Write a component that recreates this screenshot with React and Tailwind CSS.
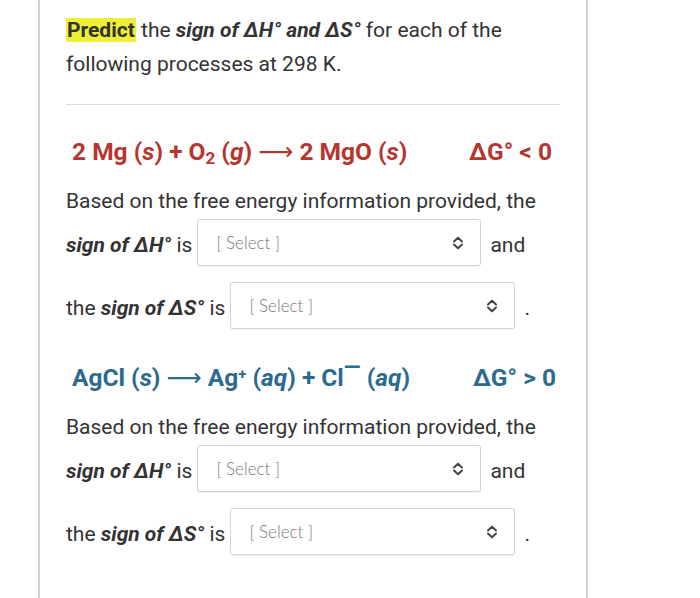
import React from "react";

function SelectBox({ width }) {
    return (
        <div
            className={`mx-[5px] flex h-[47px] items-center justify-between rounded-[3px] border border-[#d4d4d4] bg-white pl-[18px] pr-[16px] shadow-[0_1px_1px_rgba(0,0,0,0.06)] ${width}`}
        >
            <span className="font-['Lato'] text-[17px] font-light text-[#777]">[ Select ]</span>
            <svg width="12" height="14" viewBox="0 0 12 14" fill="none" stroke="#444" strokeWidth="2" strokeLinecap="round" strokeLinejoin="round">
                <path d="M2 5.5 6 1.8l4 3.7" />
                <path d="M2 8.5 6 12.2l4-3.7" />
            </svg>
        </div>
    );
}

function Question({ equation, dg, color, first }) {
    return (
        <div>
            <div className={`flex items-center justify-between text-[24.5px] font-bold leading-[34px] ${color} ${first ? "mt-[30px]" : "mt-[32px]"}`}>
                <span className="pl-[6px]">{equation}</span>
                <span className={first ? "pr-[8px]" : "pr-[4px]"}>{dg}</span>
            </div>
            <p className="mt-[15px] leading-[34px]">Based on the free energy information provided, the</p>
            <div className="mt-[1px] flex items-center">
                <span className="pt-[6px]">
                    <b><i>sign of ΔH°</i></b> is
                </span>
                <SelectBox width="w-[284px]" />
                <span className="pt-[6px] pl-[4px]">and</span>
            </div>
            <div className="mt-[16px] flex items-center">
                <span className="pt-[6px]">
                    the <b><i>sign of ΔS°</i></b> is
                </span>
                <SelectBox width="w-[285px]" />
                <span className="pt-[6px] pl-[4px]">.</span>
            </div>
        </div>
    );
}

export default function App() {
    return (
        <div className="h-[598px] w-[700px] overflow-hidden bg-white font-['Roboto',sans-serif] text-[21px] text-[#333]">
            <div className="ml-[38px] h-full w-[550px] border-x-2 border-[#d0d0d0] pl-[26px] pr-[26px] pt-[13px]">
                <p className="leading-[34px]">
                    <b className="bg-[#eef037] px-[1px]">Predict</b> the <b><i>sign of ΔH° and ΔS°</i></b> for each of the following processes at 298 K.
                </p>
                <div className="mt-[23px] border-t border-[#dcdcdc]" />
                <Question
                    first
                    color="text-[#b5362f]"
                    equation={
                        <>
                            2 Mg (<i>s</i>) + O<sub className="text-[17px]">2</sub> (<i>g</i>) <span className="font-['DejaVu_Sans'] font-normal">⟶</span> 2 MgO (<i>s</i>)
                        </>
                    }
                    dg="ΔG° < 0"
                />
                <Question
                    color="text-[#2c6a8e]"
                    equation={
                        <>
                            AgCl (<i>s</i>) <span className="font-['DejaVu_Sans'] font-normal">⟶</span> Ag<sup className="text-[15px]">+</sup> (<i>aq</i>) + Cl<sup className="text-[22px]">—</sup> (<i>aq</i>)
                        </>
                    }
                    dg="ΔG° > 0"
                />
            </div>
        </div>
    );
}
